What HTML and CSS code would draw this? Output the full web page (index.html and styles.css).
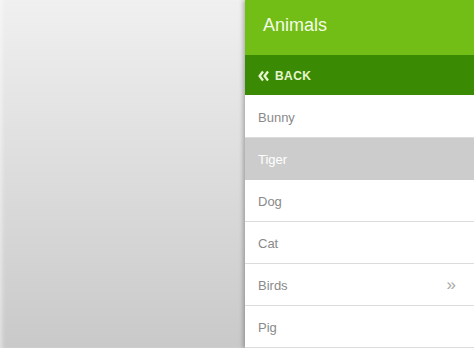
FILE: index.html
```html
<!DOCTYPE html>
<html>
<head>
<meta charset="utf-8">
<link rel="stylesheet" href="styles.css">
</head>
<body>
<div class="page">
  <div class="backdrop"></div>
  <nav class="menu">
    <div class="menu-title">Animals</div>
    <div class="menu-back"><svg class="back-icon" width="11" height="12" viewBox="0 0 11 12"><path d="M5 1.5 L1.6 6 L5 10.5 M10 1.5 L6.6 6 L10 10.5" fill="none" stroke="#e6f5cf" stroke-width="2.3" stroke-linejoin="miter" stroke-linecap="butt"/></svg>BACK</div>
    <ul class="menu-list">
      <li class="item">Bunny</li>
      <li class="item active">Tiger</li>
      <li class="item">Dog</li>
      <li class="item">Cat</li>
      <li class="item has-sub">Birds<span class="sub-icon">»</span></li>
      <li class="item">Pig</li>
    </ul>
  </nav>
</div>
</body>
</html>
```

FILE: styles.css
```css
html, body {
  margin: 0;
  padding: 0;
  height: 100%;
  overflow: hidden;
}
body {
  font-family: "Liberation Sans", Arial, sans-serif;
}
.page {
  display: flex;
  height: 348px;
  width: 474px;
}
.backdrop {
  flex: 1;
  background: linear-gradient(to bottom, #f0f0f0 0%, #c9c9c9 100%);
  box-shadow: inset 4px 0 4px -2px rgba(255,255,255,0.5);
}
.menu {
  width: 229px;
  background: #fff;
  box-shadow: -2px 0 4px rgba(0,0,0,0.25);
  position: relative;
  z-index: 1;
}
.menu-title {
  height: 55px;
  background: #72bd16;
  color: #f4fbe8;
  font-size: 18px;
  padding-left: 18px;
  line-height: 51px;
}
.menu-back {
  height: 40px;
  background: #3b8a03;
  color: #e6f5cf;
  font-size: 12px;
  font-weight: bold;
  letter-spacing: 0.4px;
  padding-left: 13px;
  line-height: 40px;
  display: flex;
  align-items: center;
  padding-top: 1px;
  box-sizing: border-box;
}
.back-icon {
  margin-right: 6px;
  display: block;
}
.menu-list {
  list-style: none;
  margin: 0;
  padding: 1px 0 0 0;
}
.item {
  height: 41px;
  line-height: 44px;
  border-bottom: 1px solid #dcdcdc;
  color: #8a8a8a;
  font-size: 13px;
  padding-left: 13px;
  padding-right: 18px;
  display: flex;
  justify-content: space-between;
}
.item.active {
  background: #cccccc;
  color: #fff;
  border-bottom-color: #cccccc;
}
.sub-icon {
  color: #a8a8a8;
  font-size: 17px;
  line-height: 42px;
}
```
